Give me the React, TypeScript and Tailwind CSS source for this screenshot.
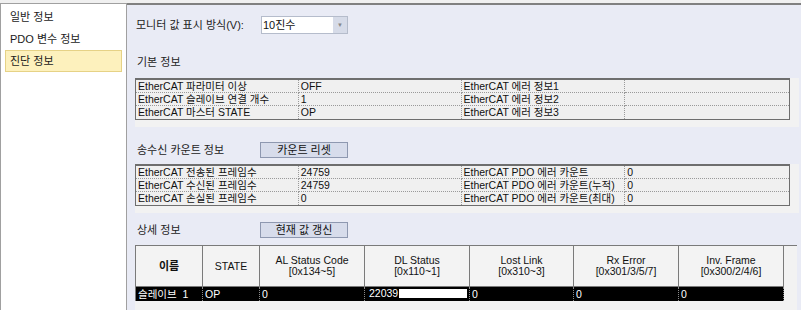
import React from "react";

const basicRows = [
  ["EtherCAT 파라미터 이상", "OFF", "EtherCAT 에러 정보1", ""],
  ["EtherCAT 슬레이브 연결 개수", "1", "EtherCAT 에러 정보2", ""],
  ["EtherCAT 마스터 STATE", "OP", "EtherCAT 에러 정보3", ""],
];

const countRows = [
  ["EtherCAT 전송된 프레임수", "24759", "EtherCAT PDO 에러 카운트", "0"],
  ["EtherCAT 수신된 프레임수", "24759", "EtherCAT PDO 에러 카운트(누적)", "0"],
  ["EtherCAT 손실된 프레임수", "0", "EtherCAT PDO 에러 카운트(최대)", "0"],
];

const detailCols = [
  { w: "w-[67px]", top: "이름", sub: "", bold: true },
  { w: "w-[57px]", top: "STATE", sub: "" },
  { w: "w-[105px]", top: "AL Status Code", sub: "[0x134~5]" },
  { w: "w-[105px]", top: "DL Status", sub: "[0x110~1]" },
  { w: "w-[104px]", top: "Lost Link", sub: "[0x310~3]" },
  { w: "w-[105px]", top: "Rx Error", sub: "[0x301/3/5/7]" },
  { w: "w-[105px]", top: "Inv. Frame", sub: "[0x300/2/4/6]" },
];

const detailRow = ["슬레이브  1", "OP", "0", "22039", "0", "0", "0"];

const menu = ["일반 정보", "PDO 변수 정보", "진단 정보"];

const InfoTable = ({ rows }: { rows: string[][] }) => (
  <div className="w-[664px] h-[49px] bg-[#f2f2f2]">
    <div className="w-[655px] border-t-2 border-l border-r border-b border-[#6e6e6e] bg-[#f0f0f0]">
      {rows.map((row, i) => (
        <div className="flex h-[13px]" key={i}>
          {row.map((cell, j) => (
            <div
              key={j}
              className={`${j < 2 ? "w-[163px]" : "w-[164px]"} ${j < 3 ? "border-r" : ""} ${
                i < rows.length - 1 ? "border-b" : ""
              } border-dotted border-[#9a9a9a] pl-[2px] leading-[12px] text-[10.5px] text-[#111] whitespace-nowrap overflow-hidden`}
            >
              {cell}
            </div>
          ))}
        </div>
      ))}
    </div>
  </div>
);

const SectionHead = ({ label, button }: { label: string; button?: string }) => (
  <div className="flex items-center h-[16px]">
    <span className="w-[125px] pl-[2px] text-[11px] text-[#222]">{label}</span>
    {button && (
      <div className="w-[88px] h-[16px] flex items-center justify-center bg-[#d7dceb] border border-[#8e98b0] text-[11px] text-[#111]">
        {button}
      </div>
    )}
  </div>
);

export default function App() {
  return (
    <div className="w-[801px] h-[310px] flex flex-col bg-[#f0f0f0] overflow-hidden font-['Liberation_Sans','Noto_Sans_CJK_KR',sans-serif]">
      <div className="h-[3px] shrink-0" />
      <div className="flex flex-1 min-h-0">
        <div className="w-[127px] shrink-0 bg-white border-t border-l border-r border-[#a0a0a0] pt-[2px] px-[4px] flex flex-col">
          {menu.map((m, i) => (
            <div
              key={m}
              className={`h-[22px] flex items-center pl-[4px] text-[11px] text-[#1a1a1a] ${
                i === 2 ? "bg-[#fdf1bd] border border-[#e6d286]" : "border border-transparent"
              }`}
            >
              {m}
            </div>
          ))}
        </div>
        <div className="flex-1 bg-[#e9ebf5] border-t-2 border-[#808080] pl-[8px] flex flex-col">
          <div className="flex items-center mt-[11px] h-[18px]">
            <span className="w-[126px] pl-[1px] text-[11px] text-[#222]">모니터 값 표시 방식(V):</span>
            <div className="w-[87px] h-[18px] flex bg-white border border-[#b5bccb]">
              <span className="flex-1 pl-[1px] text-[11px] leading-[16px] text-[#111]">10진수</span>
              <span className="w-[14px] bg-[#d6dbe8] flex items-center justify-center text-[6px] text-[#888]">▼</span>
            </div>
          </div>
          <div className="mt-[20px]">
            <SectionHead label="기본 정보" />
          </div>
          <div className="mt-[8px]">
            <InfoTable rows={basicRows} />
          </div>
          <div className="mt-[15px]">
            <SectionHead label="송수신 카운트 정보" button="카운트 리셋" />
          </div>
          <div className="mt-[6px]">
            <InfoTable rows={countRows} />
          </div>
          <div className="mt-[9px]">
            <SectionHead label="상세 정보" button="현재 값 갱신" />
          </div>
          <div className="mt-[7px] w-[662px] flex-1 bg-[#f2f2f2] border-t border-[#7a7a7a]">
            <div className="w-[649px] border-l border-[#7a7a7a]">
              <div className="flex h-[41px] border-b border-[#7a7a7a]">
                {detailCols.map((c) => (
                  <div
                    key={c.top}
                    className={`${c.w} shrink-0 border-r border-[#7a7a7a] bg-[#f3f3f3] flex flex-col items-center justify-center text-[10.5px] leading-[11px] text-[#111]`}
                  >
                    <span className={c.bold ? "font-bold text-[11px]" : ""}>{c.top}</span>
                    {c.sub && <span>{c.sub}</span>}
                  </div>
                ))}
              </div>
              <div className="flex h-[14px] bg-black">
                {detailRow.map((v, i) => (
                  <div
                    key={i}
                    className={`${detailCols[i].w} shrink-0 border-r border-dotted border-[#8a8a8a] text-[10.5px] leading-[14px] text-white whitespace-pre pl-[2px] overflow-hidden`}
                  >
                    {i === 3 ? (
                      <div className="mt-[1px] h-[11px] mr-[1px] bg-white border border-black flex items-center">
                        <span className="bg-black text-white leading-[9px] px-[1px]">{v}</span>
                      </div>
                    ) : (
                      v
                    )}
                  </div>
                ))}
              </div>
            </div>
          </div>
        </div>
      </div>
    </div>
  );
}
